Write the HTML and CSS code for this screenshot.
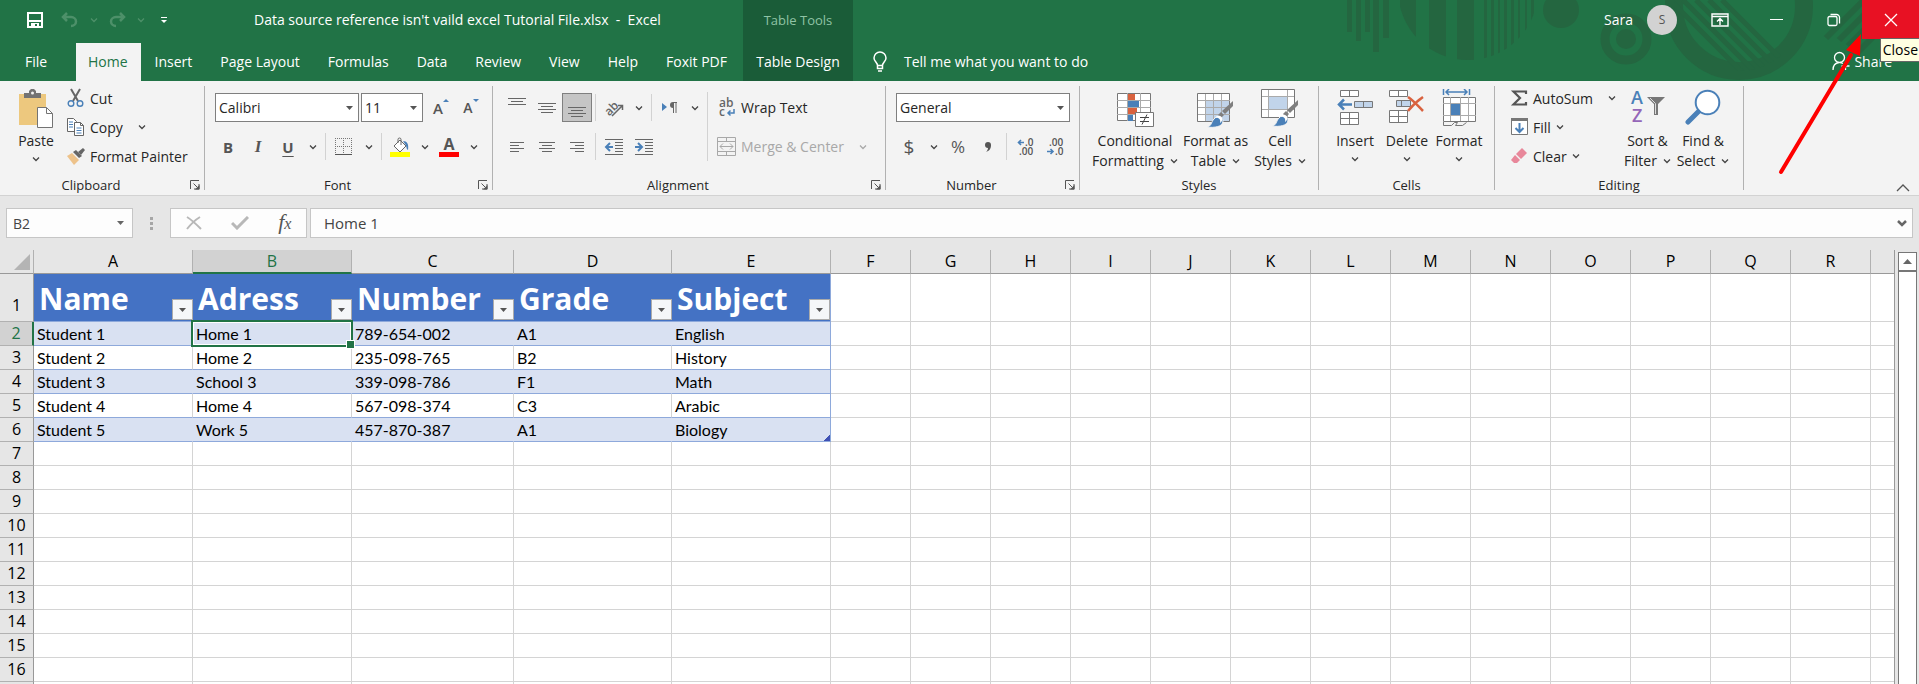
FILE: index.html
```html
<!DOCTYPE html>
<html lang="en">
<head>
    <meta charset="UTF-8">
    <meta name="viewport" content="width=device-width, initial-scale=1.0">
    <title>Data source reference isn't vaild excel Tutorial File.xlsx - Excel</title>
    <link rel="stylesheet" href="styles.css">
</head>
<body>
    <svg class="defs" aria-hidden="true">
        <symbol id="chev" viewBox="0 0 8 8"><path d="M1 2.5l3 3 3-3" fill="none" stroke="currentColor" stroke-width="1.3"/></symbol>
        <symbol id="launcher" viewBox="0 0 10 10"><path d="M.5 9V.5H9M3.5 3.5l4 4M9 4v5H4" fill="none" stroke="#555"/><path d="M9.500 5v4.500H5z" fill="#555"/></symbol>
        <symbol id="brush" viewBox="0 0 28 28"><path d="M26 1v5l-8 8-3-3z" fill="#7f7f7f"/><path d="M14 12l3 3-3 3-3-3z" fill="#7f7f7f"/><path d="M0 27c5-1 4-5 7-8 3-4 9-2 9 2 0 6-9 7-16 6z" fill="#4a80b8" stroke="#f3f3f3"/><path d="M8 18c4-1 6 2 5 5 3-2 3-6 0-7-2-.5-4 .5-5 2z" fill="#fff"/></symbol>
    </svg>

    <div class="app">
        <header class="header">
            <svg class="pattern" viewBox="1319 0 600 81" aria-hidden="true">
                <defs>
                    <clipPath id="disc"><circle cx="1468" cy="-10" r="70"/></clipPath>
                    <clipPath id="ring"><circle cx="1739" cy="6" r="65"/></clipPath>
                </defs>
                <g fill="#246640">
                    <path d="M1347 0h5v32h-5zM1356 0h5v41h-5zM1365 0h5v32h-5zM1373 0h6v52h-6zM1383 0h6v38h-6z"/>
                    <path clip-path="url(#disc)" d="M1400 0h16v60h-16zM1429 0h17v60h-17zM1457 0h17v60h-17zM1484 0h3v60h-3zM1491 0h3v60h-3zM1498 0h2v60h-2zM1504 0h3v60h-3zM1511 0h3v60h-3zM1518 0h2v60h-2zM1525 0h2v60h-2zM1531 0h3v60h-3z"/>
                    <circle cx="1561" cy="10" r="18"/>
                    <circle cx="1626" cy="39" r="10"/>
                </g>
                <g fill="none" stroke="#246640">
                    <circle cx="1626" cy="39" r="21" stroke-width="9"/>
                    <circle cx="1739" cy="6" r="65" stroke-width="18"/>
                    <path clip-path="url(#ring)" stroke-width="5" d="M1670 0l80 80M1683 0l80 80M1696 0l80 80M1709 0l80 80M1722 0l80 80"/>
                    <path stroke-width="6" d="M1826 38l38-38M1839 40l40-40M1848 46l46-46M1858 52l52-52"/>
                </g>
            </svg>

            <div class="titlebar">
                <div class="quick">
                    <button class="qbtn" aria-label="Save"><svg width="16" height="16"><path d="M1 1h14v14H1z" fill="none" stroke="#fff" stroke-width="2"/><path d="M2 8h12v2H2zM4 11h8v4h-2v-3H8v3H4z" fill="#fff"/></svg></button>
                    <button class="qbtn dim" aria-label="Undo"><svg width="18" height="16"><path d="M2 5h8a5 4.500 0 0 1 0 9M6 1L2 5l4 4" fill="none" stroke="currentColor" stroke-width="2.500"/></svg></button>
                    <button class="qchev dim" aria-label="Undo list"><svg width="8" height="8"><use href="#chev"/></svg></button>
                    <button class="qbtn dim" aria-label="Redo"><svg width="18" height="16"><path d="M16 5H8a5 4.500 0 0 0 0 9M12 1l4 4-4 4" fill="none" stroke="currentColor" stroke-width="2.500"/></svg></button>
                    <button class="qchev dim" aria-label="Redo list"><svg width="8" height="8"><use href="#chev"/></svg></button>
                    <button class="qbtn" aria-label="Customize Quick Access Toolbar"><svg width="6" height="8"><path d="M0 1.500h6" stroke="#fff"/><path d="M0 4h6L3 7z" fill="#fff"/></svg></button>
                </div>
                <div class="doc-title">Data source reference isn't vaild excel Tutorial File.xlsx&nbsp; -&nbsp; Excel</div>
            </div>

            <nav class="tabs">
                <a class="tab file" href="#">File</a>
                <a class="tab active" href="#">Home</a>
                <a class="tab" href="#">Insert</a>
                <a class="tab" href="#">Page Layout</a>
                <a class="tab" href="#">Formulas</a>
                <a class="tab" href="#">Data</a>
                <a class="tab" href="#">Review</a>
                <a class="tab" href="#">View</a>
                <a class="tab" href="#">Help</a>
                <a class="tab" href="#">Foxit PDF</a>
            </nav>

            <div class="context">
                <span class="context-name">Table Tools</span>
                <a class="context-tab" href="#">Table Design</a>
            </div>

            <div class="window-bar">
                <span class="user">Sara</span>
                <span class="avatar">S</span>
                <button class="win" aria-label="Ribbon Display Options"><svg width="18" height="14"><path d="M1 1h16v12H1zM1 3.500h16M9 12V6M6 8.500l3-3 3 3" fill="none" stroke="#fff" stroke-width="1.400"/></svg></button>
                <button class="win" aria-label="Minimize"><svg width="13" height="14"><path d="M0 6.500h13" stroke="#fff"/></svg></button>
                <button class="win" aria-label="Restore"><svg width="14" height="14"><rect x="1" y="3.500" width="9" height="9" rx="1.500" fill="none" stroke="#fff" stroke-width="1.300"/><path d="M3.500 1.500h6a3 3 0 0 1 3 3v6" fill="none" stroke="#fff" stroke-width="1.300"/></svg></button>
                <button class="win close" aria-label="Close"><svg width="14" height="14"><path d="M1 1l12 12M13 1L1 13" stroke="#fff" stroke-width="1.300"/></svg></button>
            </div>

            <div class="tell-bar">
                <a class="tell" href="#">
                    <svg width="14" height="21" fill="none" stroke="#fff" stroke-width="1.500"><path d="M4.500 14.500c0-3-3.500-4-3.500-7.500a6 6 0 0 1 12 0c0 3.500-3.500 4.500-3.500 7.500zM4.500 14v3.500h5V14M5 20h4"/></svg>
                    Tell me what you want to do
                </a>
                <a class="share" href="#">
                    <svg width="18" height="20" fill="none" stroke="#fff" stroke-width="1.300"><circle cx="7.500" cy="6.500" r="5"/><path d="M1 19c0-4 2-7 6-7.500M8 11.500c1 0 2 .5 3 1M13.500 11v8M9.500 15h8"/></svg>
                    Share
                </a>
            </div>

            <div class="tooltip" role="tooltip">Close</div>
        </header>

        <svg class="pointer" viewBox="0 0 90 145" aria-hidden="true">
            <path d="M5 139L75 22" stroke="#f00" stroke-width="4" stroke-linecap="round"/>
            <path d="M85 1L70 17l14 6z" fill="#f00"/>
        </svg>

        <div class="ribbon">
            <section class="group clipboard">
                <div class="group-body">
                    <button class="big paste">
                        <span class="big-icon"><svg width="36" height="39"><path d="M1 5h27v31H1z" fill="#edc87e"/><path d="M6 9V4h5V2l2-2h3l2 2v2h5v5z" fill="#737373"/><circle cx="14.500" cy="4" r="1.500" fill="#f3f3f3"/><path d="M19.500 18.500h9l6 6v14h-15z" fill="#fff" stroke="#737373"/><path d="M28.500 18.500v6h6" fill="none" stroke="#737373"/></svg></span>
                        Paste<svg class="chev" width="8" height="8"><use href="#chev"/></svg>
                    </button>
                    <div class="stack">
                        <button class="line"><svg width="18" height="18" fill="none"><path d="M4 0l7 12M13 0L6 12" stroke="#666" stroke-width="2"/><circle cx="4" cy="14.500" r="2.800" stroke="#4a80b8" stroke-width="1.400"/><circle cx="13" cy="14.500" r="2.800" stroke="#4a80b8" stroke-width="1.400"/></svg>Cut</button>
                        <button class="line"><svg width="18" height="18" stroke="#666" fill="#fff"><path d="M.5.5h6l3 3v10h-9z"/><path d="M7.500 4.500h6l3 3v10h-9z"/><path d="M13.500 4.500v3h3" fill="none"/><path d="M2 4h4M2 6.500h4M2 9h4M9.500 10h5M9.500 12.500h5M9.500 15h5" stroke="#4a80b8"/></svg>Copy<svg class="chev far" width="8" height="8"><use href="#chev"/></svg></button>
                        <button class="line"><svg width="18" height="18"><path d="M0 9l5-3 7 7-5 5z" fill="#edc28a"/><path d="M6 5l3-2 6 6-3 2z" fill="#666"/><path d="M11 5l5-4 2 2-4 5z" fill="#666"/></svg>Format Painter</button>
                    </div>
                </div>
                <div class="group-foot"><span>Clipboard</span><button aria-label="Clipboard options"><svg width="10" height="10"><use href="#launcher"/></svg></button></div>
            </section>
            <div class="rule"></div>

            <section class="group font">
                <div class="group-body rows">
                    <div class="row">
                        <select class="pick wide" aria-label="Font"><option>Calibri</option></select>
                        <select class="pick narrow" aria-label="Font size"><option>11</option></select>
                        <button class="tool grow" aria-label="Increase font size"><span class="letter">A</span><svg width="6" height="14"><path d="M0 4l3-3 3 3z" fill="#4a80b8"/></svg></button>
                        <button class="tool grow" aria-label="Decrease font size"><span class="letter small">A</span><svg width="6" height="14"><path d="M0 1h6L3 4z" fill="#4a80b8"/></svg></button>
                    </div>
                    <div class="row">
                        <button class="tool mark bold">B</button>
                        <button class="tool mark italic">I</button>
                        <button class="tool mark under">U</button>
                        <button class="drop" aria-label="Underline styles"><svg width="8" height="8"><use href="#chev"/></svg></button>
                        <i class="bar"></i>
                        <button class="tool" aria-label="Borders"><svg width="18" height="18" stroke="#777"><path d="M.5 0v16M8.500 0v16M16.500 0v16M0 .5h17M0 8.500h17" stroke-dasharray="1 1"/><path d="M0 16.500h17" stroke="#555"/></svg></button>
                        <button class="drop" aria-label="Border styles"><svg width="8" height="8"><use href="#chev"/></svg></button>
                        <i class="bar"></i>
                        <button class="tool" aria-label="Fill color"><svg width="20" height="20"><path d="M4 9l6-6 6 6-6 6z" fill="#fff" stroke="#666"/><path d="M8 6V2.500a1.500 1.500 0 0 1 3 0V8" fill="none" stroke="#666"/><path d="M13 4c4 0 6 3 5 9-2-1-1-4-3-6z" fill="#4a80b8"/><path d="M0 15h20v5H0z" fill="#ff0"/></svg></button>
                        <button class="drop" aria-label="Fill color list"><svg width="8" height="8"><use href="#chev"/></svg></button>
                        <button class="tool font-color" aria-label="Font color"><b>A</b></button>
                        <button class="drop" aria-label="Font color list"><svg width="8" height="8"><use href="#chev"/></svg></button>
                    </div>
                </div>
                <div class="group-foot"><span>Font</span><button aria-label="Font options"><svg width="10" height="10"><use href="#launcher"/></svg></button></div>
            </section>
            <div class="rule"></div>

            <section class="group align">
                <div class="group-body">
                    <div class="rows">
                        <div class="row">
                            <button class="tool" aria-label="Top align"><svg class="up" width="18" height="18" stroke="#666"><path d="M0 3.500h18M3 6.500h12M0 9.500h18"/></svg></button>
                            <button class="tool" aria-label="Middle align"><svg width="18" height="18" stroke="#666"><path d="M0 4.500h18M3 7.500h12M0 10.500h18M3 13.500h12"/></svg></button>
                            <button class="tool pressed" aria-label="Bottom align"><svg width="18" height="18" stroke="#666"><path d="M0 8.500h18M3 11.500h12M0 14.500h18M3 17.500h12"/></svg></button>
                            <i class="bar"></i>
                            <button class="tool" aria-label="Orientation"><svg width="20" height="20"><text x="0" y="14" transform="rotate(-45 8 10)" class="ab">ab</text><path d="M8 18l10-10M14 7.500h4.500V12" fill="none" stroke="#666" stroke-width="1.500"/></svg></button>
                            <button class="drop" aria-label="Orientation list"><svg width="8" height="8"><use href="#chev"/></svg></button>
                            <i class="bar"></i>
                            <button class="tool" aria-label="Text direction"><svg width="16" height="12"><path d="M0 1l5 4-5 4z" fill="#4a80b8"/><path d="M11 .5h4M11.500 0v11M14 0v11" stroke="#666"/><path d="M11 0v6a3 3 0 0 1 0-6z" fill="#666"/></svg></button>
                            <button class="drop" aria-label="Text direction list"><svg width="8" height="8"><use href="#chev"/></svg></button>
                        </div>
                        <div class="row">
                            <button class="tool" aria-label="Align left"><svg width="14" height="12" stroke="#666"><path d="M0 1.500h14M0 4.500h9M0 7.500h14M0 10.500h9"/></svg></button>
                            <button class="tool" aria-label="Center"><svg width="16" height="12" stroke="#666"><path d="M0 1.500h16M3 4.500h10M0 7.500h16M3 10.500h10"/></svg></button>
                            <button class="tool" aria-label="Align right"><svg width="14" height="12" stroke="#666"><path d="M0 1.500h14M5 4.500h9M0 7.500h14M5 10.500h9"/></svg></button>
                            <i class="bar"></i>
                            <button class="tool" aria-label="Decrease indent"><svg width="18" height="16" fill="none" stroke="#666"><path d="M0 .5h18M10 3.500h8M10 6.500h8M10 9.500h8M10 12.500h8M0 15.500h18"/><path d="M1 8h7M5 4L1 8l4 4" stroke="#4a80b8" stroke-width="2"/></svg></button>
                            <button class="tool" aria-label="Increase indent"><svg width="18" height="16" fill="none" stroke="#666"><path d="M0 .5h18M10 3.500h8M10 6.500h8M10 9.500h8M10 12.500h8M0 15.500h18"/><path d="M0 8h7M3 4l4 4-4 4" stroke="#4a80b8" stroke-width="2"/></svg></button>
                        </div>
                    </div>
                    <i class="bar tall"></i>
                    <div class="rows wraps">
                        <button class="line"><svg width="19" height="18"><text x="2" y="8" class="ab">ab</text><text x="2" y="17" class="ab">c</text><path d="M17 10v4h-6M13.500 11.500L11 14l2.500 2.500" fill="none" stroke="#4a80b8" stroke-width="1.500"/></svg>Wrap Text</button>
                        <button class="line off" disabled><svg width="19" height="19" fill="none" stroke="#a8a8a8"><path d="M.5.5h18v18H.5zM.5 4.500h18M.5 14.500h18M9.500 0v4.500M9.500 14.500V19M3 9.500h13M6 6.500l-3 3 3 3M13 6.500l3 3-3 3"/></svg>Merge &amp; Center<svg class="chev far" width="8" height="8"><use href="#chev"/></svg></button>
                    </div>
                </div>
                <div class="group-foot"><span>Alignment</span><button aria-label="Alignment options"><svg width="10" height="10"><use href="#launcher"/></svg></button></div>
            </section>
            <div class="rule"></div>

            <section class="group number">
                <div class="group-body rows">
                    <div class="row"><select class="pick full" aria-label="Number format"><option>General</option></select></div>
                    <div class="row">
                        <button class="tool sign">$</button>
                        <button class="drop" aria-label="Currency list"><svg width="8" height="8"><use href="#chev"/></svg></button>
                        <button class="tool sign percent">%</button>
                        <button class="tool" aria-label="Comma style"><svg width="6" height="10"><path d="M3 0a3 3 0 0 1 3 3c0 4-2 6-5 7 1-1 2-2.500 2-4a3 3 0 0 1 0-6z" fill="#555"/></svg></button>
                        <i class="bar"></i>
                        <button class="tool" aria-label="Increase decimal"><svg width="17" height="18"><text x="8" y="8" class="dec">.0</text><text x="2" y="17" class="dec">.00</text><path d="M7 4.500H1M4 2L1.500 4.500 4 7" fill="none" stroke="#4a80b8" stroke-width="1.600"/></svg></button>
                        <button class="tool" aria-label="Decrease decimal"><svg width="17" height="18"><text x="2" y="8" class="dec">.00</text><text x="8" y="17" class="dec">.0</text><path d="M0 13.500h6M3.500 11L6 13.500 3.500 16" fill="none" stroke="#4a80b8" stroke-width="1.600"/></svg></button>
                    </div>
                </div>
                <div class="group-foot"><span>Number</span><button aria-label="Number options"><svg width="10" height="10"><use href="#launcher"/></svg></button></div>
            </section>
            <div class="rule"></div>

            <section class="group styles">
                <div class="group-body">
                    <button class="big">
                        <span class="big-icon low"><svg width="37" height="34"><path d="M.5.5h33v27H.5z" fill="#fff" stroke="#777"/><path d="M10.500 0v28M23.500 0v28M0 7.500h34M0 14.500h34M0 21.500h34" stroke="#aaa"/><path d="M11 1h7v6h-7zM11 15h9v6h-9z" fill="#d9623f"/><path d="M11 8h11v6H11zM11 22h5v6h-5z" fill="#4a80b8"/><path d="M18.500 19.500h18v14h-18z" fill="#fff" stroke="#777"/><path d="M23 24.500h9M23 28.500h9M30 21.500l-5 10" stroke="#444"/></svg></span>
                        Conditional<br><span class="two">Formatting <svg class="chev" width="8" height="8"><use href="#chev"/></svg></span>
                    </button>
                    <button class="big">
                        <span class="big-icon low"><svg width="37" height="36"><path d="M.5.5h32v28H.5z" fill="#fff" stroke="#777"/><path d="M9 8h23v20H9z" fill="#c1d4ea"/><path d="M8.500 1v27M16.500 1v27M24.500 1v27M1 7.500h32M1 14.500h32M1 21.500h32" stroke="#aaa"/><use href="#brush" x="10" y="7" width="28" height="28"/></svg></span>
                        Format as<br><span class="two">Table <svg class="chev" width="8" height="8"><use href="#chev"/></svg></span>
                    </button>
                    <button class="big">
                        <span class="big-icon"><svg width="38" height="38"><path d="M.5.5h33v28H.5z" fill="#fff" stroke="#777"/><path d="M7.500 1v27M26.500 1v27M1 7.500h32M1 20.500h32" stroke="#aaa"/><path d="M8 8h18v12H8z" fill="#c1d4ea"/><use href="#brush" x="11" y="10" width="28" height="28"/></svg></span>
                        Cell<br><span class="two">Styles <svg class="chev" width="8" height="8"><use href="#chev"/></svg></span>
                    </button>
                </div>
                <div class="group-foot plain"><span>Styles</span></div>
            </section>
            <div class="rule"></div>

            <section class="group cells">
                <div class="group-body">
                    <button class="big">
                        <span class="big-icon"><svg width="36" height="38" fill="#fff" stroke="#777"><path d="M3.500 1.500h18v6h-18zM12.500 1.500v6M3.500 23.500h18v12h-18zM12.500 23.500v12M3.500 29.500h18"/><path d="M17.500 12.500h18v6h-18zM26.500 12.500v6" fill="#c1d4ea"/><path d="M15 15.500H2M7 10.500l-5 5 5 5" fill="none" stroke="#4a80b8" stroke-width="2.500"/></svg></span>
                        Insert<svg class="chev" width="8" height="8"><use href="#chev"/></svg>
                    </button>
                    <button class="big">
                        <span class="big-icon"><svg width="36" height="38" fill="#fff" stroke="#777"><path d="M.5 1.500h18v6H.5zM9.500 1.500v6M.5 21.500h18v12H.5zM9.500 21.500v12M.5 27.500h18"/><path d="M7.500 11.500h14v6h-14zM12.500 11.500v6" fill="#c1d4ea"/><path d="M19 8c6 4 10 9 15 14M34 8c-6 4-11 9-15 14" fill="none" stroke="#d9623f" stroke-width="2.500"/></svg></span>
                        Delete<svg class="chev" width="8" height="8"><use href="#chev"/></svg>
                    </button>
                    <button class="big">
                        <span class="big-icon"><svg width="35" height="38"><path d="M1.500 8.500h32v24h-32z" fill="#fff" stroke="#777"/><path d="M8.500 8v24M18.500 8v24M26.500 8v24M1 14.500h33M1 26.500h33" stroke="#aaa"/><path d="M9 15h9v11H9z" fill="#4a80b8"/><path d="M1.500 33v3.500h8l3-3h3l-2 3h7l4-3" fill="none" stroke="#777"/><path d="M1.500 0v6M27.500 0v6M4 3h21M7 0L4 3l3 3M22 0l3 3-3 3" fill="none" stroke="#4a80b8" stroke-width="1.500"/></svg></span>
                        Format<svg class="chev" width="8" height="8"><use href="#chev"/></svg>
                    </button>
                </div>
                <div class="group-foot plain"><span>Cells</span></div>
            </section>
            <div class="rule"></div>

            <section class="group editing">
                <div class="group-body">
                    <div class="stack">
                        <button class="line"><svg width="17" height="16"><path d="M15 4V1.500H2.500L9 8l-6.500 6.500H15V12" fill="none" stroke="#555" stroke-width="2.200"/></svg>AutoSum<svg class="chev far" width="8" height="8"><use href="#chev"/></svg></button>
                        <button class="line"><svg width="17" height="18"><path d="M.5.5h16v16H.5z" fill="#fff" stroke="#777"/><path d="M0 0h17v3H0z" fill="#777"/><path d="M8.500 5v9M4.500 10l4 4 4-4" fill="none" stroke="#4a80b8" stroke-width="2"/></svg>Fill<svg class="chev" width="8" height="8"><use href="#chev"/></svg></button>
                        <button class="line"><svg width="17" height="16"><path d="M11 0l5 5-6 6-5-5z" fill="#e8879a"/><path d="M4 7l5 5-3 3H3l-3-3z" fill="#e8879a"/></svg>Clear<svg class="chev" width="8" height="8"><use href="#chev"/></svg></button>
                    </div>
                    <button class="big">
                        <span class="big-icon"><svg width="36" height="36"><text x="1" y="15" class="sort-a">A</text><text x="2" y="33" class="sort-z">Z</text><path d="M17 8h18l-7 7v11h-4V15z" fill="#777"/><path d="M20 9l5.500 5.500V25" fill="none" stroke="#ddd"/></svg></span>
                        Sort &amp;<br><span class="two">Filter <svg class="chev" width="8" height="8"><use href="#chev"/></svg></span>
                    </button>
                    <button class="big">
                        <span class="big-icon"><svg width="36" height="36"><circle cx="22.500" cy="13.500" r="11.800" fill="#fff" stroke="#4a80b8" stroke-width="2"/><path d="M13 23L3 33" stroke="#4a80b8" stroke-width="5" stroke-linecap="round"/></svg></span>
                        Find &amp;<br><span class="two">Select <svg class="chev" width="8" height="8"><use href="#chev"/></svg></span>
                    </button>
                </div>
                <div class="group-foot plain"><span>Editing</span></div>
            </section>
            <div class="rule"></div>
            <button class="collapse" aria-label="Collapse the Ribbon"><svg width="14" height="8"><path d="M1 7l6-6 6 6" fill="none" stroke="#555" stroke-width="1.300"/></svg></button>
        </div>

        <div class="formula">
            <select class="name-box" aria-label="Name box"><option>B2</option></select>
            <svg class="dots" width="3" height="13" fill="#a6a6a6"><path d="M0 0h3v3H0zM0 5h3v3H0zM0 10h3v3H0z"/></svg>
            <div class="fx-buttons">
                <button aria-label="Cancel"><svg width="16" height="14"><path d="M1 1c5 3 9 7 14 12M14 1C9 4 5 8 1 13" fill="none" stroke="#b8b8b8" stroke-width="2"/></svg></button>
                <button aria-label="Enter"><svg width="18" height="14"><path d="M1 7l5 5L17 1" fill="none" stroke="#b8b8b8" stroke-width="3"/></svg></button>
                <button class="fx" aria-label="Insert function">f<small>x</small></button>
            </div>
            <div class="fx-field">
                <input type="text" value="Home 1" aria-label="Formula bar">
                <button aria-label="Expand formula bar"><svg width="10" height="7"><path d="M1 1l4 4 4-4" fill="none" stroke="#666" stroke-width="2.500"/></svg></button>
            </div>
        </div>

        <main class="sheet">
            <table class="grid">
                <colgroup>
                    <col class="c-num"><col class="c-a"><col class="c-a"><col class="c-c"><col class="c-d"><col class="c-a">
                    <col span="13" class="c-std"><col>
                </colgroup>
                <thead><tr id="letters"><th class="corner" aria-label="Select all"><svg width="16" height="16"><path d="M16 0v16H0z" fill="#b4b4b4"/></svg></th></tr></thead>
                <tbody id="rows"></tbody>
            </table>
            <div class="scrollbar"><button aria-label="Scroll up"><svg width="9" height="5"><path d="M0 5l4.500-5L9 5z" fill="#666"/></svg></button><div class="thumb"></div></div>
        </main>
    </div>

    <script>
        const COLUMNS = 'ABCDEFGHIJKLMNOPQR'.split('').concat('');
        const ROW_COUNT = 17;
        const DATA = [
            ['Name', 'Adress', 'Number', 'Grade', 'Subject'],
            ['Student 1', 'Home 1', '789-654-002', 'A1', 'English'],
            ['Student 2', 'Home 2', '235-098-765', 'B2', 'History'],
            ['Student 3', 'School 3', '339-098-786', 'F1', 'Math'],
            ['Student 4', 'Home 4', '567-098-374', 'C3', 'Arabic'],
            ['Student 5', 'Work 5', '457-870-387', 'A1', 'Biology']
        ];

        const letters = document.getElementById('letters');
        COLUMNS.forEach(name => {
            const th = document.createElement('th');
            th.textContent = name;
            if (name === 'B') th.className = 'picked';
            letters.appendChild(th);
        });

        const rows = document.getElementById('rows');
        for (let r = 0; r < ROW_COUNT; r++) {
            const tr = document.createElement('tr');
            const values = DATA[r] || [];
            if (r === 0) tr.className = 'head';
            else if (values.length) tr.className = r % 2 ? 'data band' : 'data';

            const num = document.createElement('th');
            // the last row is only a sliver at the window's edge
            num.textContent = r < ROW_COUNT - 1 ? r + 1 : '';
            if (r === 1) num.className = 'picked';
            tr.appendChild(num);

            COLUMNS.forEach((name, c) => {
                const td = document.createElement('td');
                if (r === 0 && values[c]) {
                    td.innerHTML = `<div class="heading"><span>${values[c]}</span><button class="filter" aria-label="Filter ${values[c]}"><svg width="7" height="4"><path d="M0 0h7L3.500 4z" fill="#555"/></svg></button></div>`;
                } else {
                    td.textContent = values[c] || '';
                }
                if (r === 1 && name === 'B') td.className = 'selected';
                if (r === 5 && name === 'E') td.className = 'last';
                tr.appendChild(td);
            });
            rows.appendChild(tr);
        }
    </script>
</body>
</html>
```
FILE: styles.css
```css
* {
    box-sizing: border-box;
}

body {
    margin: 0;
    overflow: hidden;
    background: #e6e6e6;
    color: #262626;
    font-family: "Open Sans", "Noto Sans", sans-serif;
    font-size: 14px;
}

button, select, input {
    margin: 0;
    padding: 0;
    border: 0;
    background: none;
    color: inherit;
    font: inherit;
}

a {
    color: inherit;
    text-decoration: none;
}

svg {
    flex: none;
    display: block;
}

.defs {
    position: absolute;
    width: 0;
    height: 0;
}

.app {
    position: relative;
    height: 100vh;
    display: flex;
    flex-direction: column;
}

/* title bar and tabs */

.header {
    position: relative;
    display: grid;
    grid-template-columns: 743px 110px 1fr;
    grid-template-rows: 39px 42px;
    background: #217346;
    color: #fff;
}

.pattern {
    position: absolute;
    top: 0;
    right: 0;
    width: 600px;
    height: 81px;
}

.titlebar {
    display: flex;
    align-items: center;
}

.quick {
    display: flex;
    align-items: center;
    width: 254px;
    padding-left: 20px;
}

.qbtn, .qchev {
    display: flex;
    justify-content: center;
    align-items: center;
    height: 28px;
}

.qbtn {
    width: 30px;
}

.qbtn + .qbtn {
    margin-left: 5px;
}

.qchev {
    width: 17px;
}

.dim {
    color: #4d9069;
}

.tabs {
    grid-row: 2;
    display: flex;
    padding-top: 4px;
}

.tab {
    display: flex;
    align-items: center;
    padding: 0 14px 1px;
}

.tab.file {
    width: 76px;
    padding-left: 25px;
}

.tab.active {
    padding: 0 13px 1px 12px;
    background: #f3f3f3;
    color: #217346;
}

.context {
    grid-column: 2;
    grid-row: 1 / 3;
    display: grid;
    grid-template-rows: 39px 1fr;
    place-items: center;
    background: #1a5c38;
}

.context-name {
    color: #8fc3a5;
    font-size: 13px;
}

.context-tab {
    padding-top: 2px;
}

.window-bar {
    position: relative;
    grid-column: 3;
    grid-row: 1;
    display: flex;
    justify-content: flex-end;
    align-items: center;
}

.avatar {
    display: grid;
    place-items: center;
    width: 30px;
    height: 30px;
    margin: 0 14px;
    border-radius: 50%;
    background: #d2d2d2;
    color: #555;
    font-size: 12px;
}

.win {
    display: grid;
    place-items: center;
    width: 57px;
    height: 39px;
}

.win.close {
    background: #e81123;
}

.tell-bar {
    position: relative;
    grid-column: 3;
    grid-row: 2;
    display: flex;
    justify-content: space-between;
    align-items: center;
    padding: 2px 27px 0 20px;
}

.tell, .share {
    display: flex;
    align-items: center;
    gap: 17px;
}

.share {
    gap: 4px;
}

.tooltip {
    position: absolute;
    top: 38px;
    right: 0;
    padding: 0 1px 0 2px;
    border: 1px solid #666;
    border-right: 0;
    background: #ffffe1;
    color: #000;
    line-height: 22px;
}

.pointer {
    position: absolute;
    top: 33px;
    right: 53px;
    width: 90px;
    height: 145px;
    z-index: 5;
    fill: none;
}

/* ribbon */

.ribbon {
    display: flex;
    height: 115px;
    border-bottom: 1px solid #d2d2d2;
    background: #f3f3f3;
}

.rule {
    flex: none;
    width: 1px;
    margin: 5px 0;
    background: #b1b1b1;
}

.group {
    flex: none;
    display: flex;
    flex-direction: column;
    padding: 3px 0 4px;
}

.clipboard {
    width: 204px;
}

.font {
    width: 287px;
}

.align {
    width: 392px;
}

.number {
    width: 193px;
}

.styles {
    width: 238px;
}

.cells {
    width: 175px;
}

.editing {
    width: 248px;
}

.group-body {
    flex: 1;
    display: flex;
}

.group-foot {
    display: flex;
    height: 12px;
    font-size: 13px;
    line-height: 12px;
}

.group-foot span {
    flex: 1;
    text-align: center;
}

.group-foot button {
    width: 22px;
    padding-left: 8px;
}

.big {
    display: flex;
    flex-direction: column;
    align-items: center;
    padding-top: 5px;
    line-height: 20px;
    white-space: nowrap;
}

.big br {
    display: none;
}

.big-icon {
    display: flex;
    justify-content: center;
    height: 40px;
    margin-bottom: 2px;
}

.big-icon.low {
    padding-top: 4px;
}

.big > .chev {
    margin-top: 4px;
}

.two {
    display: flex;
    align-items: center;
    gap: 6px;
}

.chev {
    color: #444;
}

.paste {
    width: 42px;
    margin: 0 10px 0 15px;
}

.stack {
    display: flex;
    flex-direction: column;
    gap: 1px;
}

.line {
    display: flex;
    align-items: center;
    gap: 5px;
    height: 28px;
    white-space: nowrap;
}

.line .far {
    margin-left: 10px;
}

.rows {
    display: flex;
    flex-direction: column;
    gap: 10px;
    padding-top: 9px;
}

.row {
    display: flex;
    align-items: center;
    height: 29px;
}

.font .group-body {
    padding-left: 8px;
}

.pick {
    height: 29px;
    padding-left: 3px;
    border: 1px solid #7f7f7f;
    border-radius: 0;
    appearance: none;
    background: #fff url("data:image/svg+xml,%3Csvg xmlns='http://www.w3.org/2000/svg' width='7' height='4'%3E%3Cpath d='M0 0h7L3.500 4z' fill='%23555'/%3E%3C/svg%3E") no-repeat right 5px center;
}

.wide {
    width: 144px;
    margin: 0 2px;
}

.narrow {
    width: 62px;
}

.full {
    width: 174px;
    margin-left: 2px;
}

.tool {
    display: flex;
    justify-content: center;
    align-items: center;
    width: 30px;
    height: 29px;
    color: #555;
}

.tool svg, .line svg {
    overflow: visible;
}

.pressed {
    border: 1px solid #7f7f7f;
    background: #c5c5c5;
}

.up {
    margin-bottom: 8px;
}

.drop {
    display: flex;
    justify-content: center;
    align-items: center;
    width: 19px;
    height: 29px;
    color: #444;
}

.bar {
    flex: none;
    width: 1px;
    height: 27px;
    margin: 0 3px;
    background: #d2d2d2;
}

.bar.tall {
    height: 69px;
    margin: 8px 9px 0 3px;
}

.grow {
    align-items: flex-start;
    padding-top: 5px;
}

.narrow + .grow {
    margin-left: 3px;
}

.letter {
    font-size: 15px;
    line-height: 20px;
    font-weight: 600;
}

.letter.small {
    font-size: 14px;
}

.mark {
    font-size: 15px;
    font-weight: 700;
}

.italic {
    font-family: "Liberation Serif", serif;
    font-size: 17px;
    font-style: italic;
}

.under {
    text-decoration: underline;
    text-underline-offset: 3px;
}

.font-color b {
    width: 20px;
    border-bottom: 5px solid #f00;
    font-size: 16px;
    line-height: 15px;
}

.align .group-body {
    padding-left: 9px;
}

.align .rows:first-child {
    width: 202px;
}

.wraps .line {
    height: 29px;
}

.off {
    color: #a8a8a8;
}

.off .chev {
    color: #a8a8a8;
}

.ab {
    fill: #666;
    font-size: 12px;
    font-weight: 600;
}

.dec {
    fill: #555;
    font-size: 10px;
    font-weight: 600;
}

.number .group-body {
    padding-left: 8px;
}

.sign {
    font-size: 19px;
}

.percent {
    font-size: 17px;
}

.styles .group-body {
    display: grid;
    grid-template-columns: 90px 71px 58px;
    padding-left: 10px;
}

.cells .group-body {
    display: grid;
    grid-template-columns: repeat(3, 52px);
    padding-left: 10px;
}

.editing .group-body {
    display: grid;
    grid-template-columns: 109px 55px 56px;
    padding-left: 16px;
}

.sort-a, .sort-z {
    fill: #4a80b8;
    font-size: 18px;
    font-weight: 600;
}

.sort-z {
    fill: #9566b8;
}

.collapse {
    align-self: flex-end;
    margin: 0 9px 3px auto;
}

/* formula bar */

.formula {
    display: flex;
    align-items: center;
    height: 54px;
    padding: 0 6px;
}

.name-box {
    width: 127px;
    height: 30px;
    padding-left: 6px;
    border: 1px solid #c6c6c6;
    border-radius: 0;
    appearance: none;
    background: #fdfdfd url("data:image/svg+xml,%3Csvg xmlns='http://www.w3.org/2000/svg' width='7' height='4'%3E%3Cpath d='M0 0h7L3.500 4z' fill='%23666'/%3E%3C/svg%3E") no-repeat right 8px center;
    color: #444;
}

.dots {
    margin: 0 17px;
}

.fx-buttons, .fx-field {
    display: flex;
    align-items: center;
    height: 30px;
    border: 1px solid #c6c6c6;
    background: #fdfdfd;
}

.fx-buttons {
    justify-content: space-around;
    width: 137px;
    margin-right: 3px;
}

.fx {
    color: #555;
    font-family: "Liberation Serif", serif;
    font-size: 22px;
    font-style: italic;
    line-height: 24px;
}

.fx small {
    font-size: 16px;
}

.fx-field {
    flex: 1;
    padding: 0 5px 0 13px;
}

.fx-field input {
    flex: 1;
    outline: 0;
    color: #444;
    font-size: 15px;
}

/* sheet */

.sheet {
    flex: 1;
    min-height: 0;
    display: flex;
    overflow: hidden;
}

.grid {
    flex: 1;
    align-self: flex-start;
    width: 100%;
    border-right: 1px solid #999;
    border-spacing: 0;
    table-layout: fixed;
}

.c-num {
    width: 34px;
}

.c-a {
    width: 159px;
}

.c-c {
    width: 162px;
}

.c-d {
    width: 158px;
}

.c-std {
    width: 80px;
}

.grid th, .grid td {
    height: 24px;
    padding: 0;
    border-right: 1px solid #d4d4d4;
    border-bottom: 1px solid #d4d4d4;
    line-height: 23px;
    white-space: nowrap;
}

.grid th {
    border-color: #b1b1b1;
    background: #e6e6e6;
    color: #000;
    font-size: 16px;
    font-weight: 400;
}

.grid thead th {
    border-bottom-color: #999;
}

.grid tbody th {
    border-right-color: #999;
}

.grid .corner svg {
    margin: 4px 0 3px 14px;
}

.grid td {
    padding-left: 3px;
    background: #fff;
    color: #000;
    font-family: Lato, sans-serif;
    font-size: 16px;
}

.grid td:last-child, .grid thead th:last-child {
    border-right: 0;
}

.grid .head th, .grid .head td {
    height: 48px;
    vertical-align: bottom;
}

.grid .head th {
    padding-bottom: 4px;
}

.grid .head td:nth-child(-n+6) {
    padding: 0 0 1px 5px;
    border-right: 0;
    border-bottom-color: #8ea9db;
    background: #4472c4;
    color: #fff;
}

.heading {
    display: flex;
    justify-content: space-between;
    align-items: flex-end;
    height: 46px;
    font-family: "Open Sans", sans-serif;
    font-size: 30px;
    font-weight: 700;
    line-height: 42px;
}

.filter {
    display: grid;
    place-items: center;
    width: 21px;
    height: 21px;
    border: 1px solid #ababab;
    background: #f5f7f9;
}

.data td:nth-child(-n+6) {
    border-bottom-color: #8ea9db;
}

.band td:nth-child(-n+6) {
    border-right-color: #d9e1f2;
    background: #d9e1f2;
}

.grid .data td:nth-child(6), .grid .head td:nth-child(6) {
    border-right: 1px solid #8ea9db;
}

.grid .picked {
    background: #d2d2d2;
    color: #217346;
}

.grid thead .picked {
    border-bottom: 2px solid #217346;
    line-height: 22px;
}

.grid tbody .picked {
    border-right: 2px solid #217346;
}

.selected, .last {
    position: relative;
}

.selected::before {
    content: "";
    position: absolute;
    inset: -2px;
    border: 2px solid #217346;
    box-shadow: inset 0 0 0 1px #fff;
}

.selected::after {
    content: "";
    position: absolute;
    right: -4px;
    bottom: -4px;
    width: 7px;
    height: 7px;
    border: 1px solid #fff;
    background: #217346;
    z-index: 1;
}

.last::after {
    content: "";
    position: absolute;
    right: 0;
    bottom: 0;
    width: 6px;
    height: 6px;
    background: linear-gradient(135deg, transparent 50%, #3f51b5 50%);
}

.scrollbar {
    flex: none;
    display: flex;
    flex-direction: column;
    width: 19px;
    margin: 2px 2px 0 3px;
    border: 1px solid #777;
    border-bottom: 0;
    background: #fff;
}

.scrollbar button {
    display: grid;
    place-items: center;
    height: 19px;
    border-bottom: 2px solid #777;
}
```
